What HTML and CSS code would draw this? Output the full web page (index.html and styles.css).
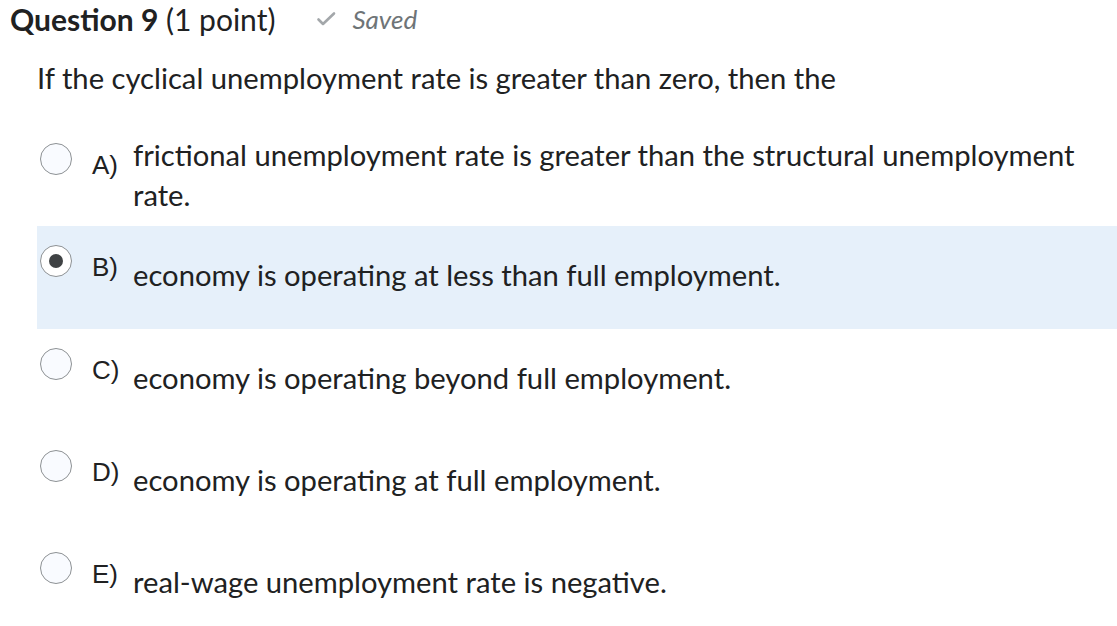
FILE: index.html
```html
<!DOCTYPE html>
<html lang="en">
<head>
<meta charset="utf-8">
<title>Question 9</title>
<link rel="stylesheet" href="styles.css">
</head>
<body>
<div class="page">
  <div class="q-header">
    <h2 class="q-title"><strong>Question 9</strong> (1 point)</h2>
    <span class="saved">
      <svg class="check" width="20" height="16" viewBox="0 0 20 16" aria-hidden="true"><path d="M2.5 8.5 L7 13 L18 2.5" fill="none" stroke="#a3a7aa" stroke-width="2.6" stroke-linecap="round" stroke-linejoin="round"/></svg>
      <em>Saved</em>
    </span>
  </div>
  <p class="prompt">If the cyclical unemployment rate is greater than zero, then the</p>
  <div class="options">
    <div class="option">
      <span class="radio"></span>
      <span class="letter">A)</span>
      <div class="text"><span>frictional unemployment rate is greater than the structural unemployment rate.</span></div>
    </div>
    <div class="option selected">
      <span class="radio checked"></span>
      <span class="letter">B)</span>
      <div class="text"><span>economy is operating at less than full employment.</span></div>
    </div>
    <div class="option">
      <span class="radio"></span>
      <span class="letter">C)</span>
      <div class="text"><span>economy is operating beyond full employment.</span></div>
    </div>
    <div class="option">
      <span class="radio"></span>
      <span class="letter">D)</span>
      <div class="text"><span>economy is operating at full employment.</span></div>
    </div>
    <div class="option">
      <span class="radio"></span>
      <span class="letter">E)</span>
      <div class="text"><span>real-wage unemployment rate is negative.</span></div>
    </div>
  </div>
</div>
</body>
</html>
```

FILE: styles.css
```css
html, body {
  margin: 0;
  padding: 0;
  background: #ffffff;
}
body {
  font-family: Lato, "Noto Sans", sans-serif;
  color: #202122;
  overflow: hidden;
}
.page {
  padding: 0 0 0 10px;
}
.q-header {
  display: flex;
  align-items: center;
  height: 38px;
  gap: 41px;
}
.q-title {
  margin: 0;
  font-size: 30px;
  font-weight: 400;
  line-height: 38px;
}
.q-title strong {
  font-weight: 700;
}
.saved {
  display: flex;
  align-items: center;
  gap: 16px;
  color: #6e7477;
  font-size: 26px;
}
.saved em {
  font-style: italic;
}
.check {
  display: block;
}
.prompt {
  margin: 20px 0 0 27px;
  font-size: 29.2px;
  line-height: 40px;
}
.options {
  margin: 26px 0 0 27px;
}
.option {
  display: flex;
  align-items: flex-start;
  min-height: 102px;
  box-sizing: border-box;
  padding-left: 3px;
}
.option.selected {
  background: #e6f0fa;
  min-height: 103px;
}
.radio {
  flex: none;
  width: 32px;
  height: 32px;
  box-sizing: border-box;
  border: 1px solid #8d9194;
  border-radius: 50%;
  background: #f9fbff;
  margin-top: 19px;
  position: relative;
}
.radio.checked {
  background: #ffffff;
}
.radio.checked::after {
  content: "";
  position: absolute;
  left: 8px;
  top: 8px;
  width: 14px;
  height: 14px;
  border-radius: 50%;
  background: #3f4244;
}
.letter {
  flex: none;
  font-family: "Liberation Sans", Arial, sans-serif;
  font-size: 26px;
  line-height: 30px;
  margin: 26px 0 0 20px;
  width: 41px;
}
.text {
  display: flex;
  align-items: center;
  min-height: 76px;
  margin-top: 11px;
  font-size: 29.2px;
  line-height: 40px;
  padding-right: 30px;
}
```
